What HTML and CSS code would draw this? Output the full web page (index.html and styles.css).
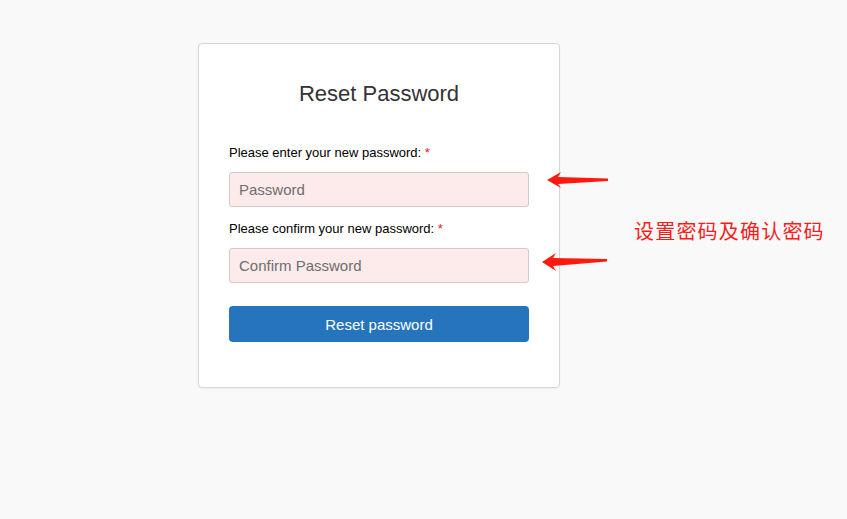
FILE: index.html
```html
<!DOCTYPE html>
<html lang="en">
<head>
<meta charset="utf-8">
<title>Reset Password</title>
<link rel="stylesheet" href="styles.css">
</head>
<body>
<div class="page">
  <div class="card">
    <h2 class="title">Reset Password</h2>
    <form class="form">
      <div class="field">
        <label class="label">Please enter your new password: <span class="req">*</span></label>
        <input class="input" type="password" placeholder="Password">
      </div>
      <div class="field">
        <label class="label">Please confirm your new password: <span class="req">*</span></label>
        <input class="input" type="password" placeholder="Confirm Password">
      </div>
      <button type="button" class="btn">Reset password</button>
    </form>
  </div>
</div>
<svg class="arrows" width="847" height="519" viewBox="0 0 847 519">
  <polygon points="547,180 561,172 558,177 608,178.5 608,181 558,184 561,188" fill="#ff1a0f"/>
  <polygon points="542,262 556,253 553,258 607,259 607,261.5 553,266 556,271" fill="#ff1a0f"/>
</svg>
<div class="note">设置密码及确认密码</div>
</body>
</html>
```
FILE: styles.css
```css
html, body {
  margin: 0;
  padding: 0;
}
body {
  background: #f9f9f9;
  font-family: "Liberation Sans", Arial, sans-serif;
  color: #333;
  width: 847px;
  height: 519px;
  overflow: hidden;
  position: relative;
}
.page {
  display: flex;
  padding: 43px 0 0 198px;
}
.card {
  width: 300px;
  background: #fff;
  border: 1px solid #d6d6d6;
  border-radius: 4px;
  padding: 37px 30px 45px;
  box-shadow: 0 1px 2px rgba(0,0,0,0.05);
}
.title {
  margin: 0;
  font-size: 22px;
  font-weight: normal;
  line-height: 26px;
  text-align: center;
  color: #333;
}
.form {
  display: flex;
  flex-direction: column;
  margin-top: 37px;
}
.field {
  display: flex;
  flex-direction: column;
  gap: 10px;
  margin-bottom: 13px;
}
.label {
  font-size: 13px;
  line-height: 18px;
  color: #000;
}
.req {
  color: #e02020;
}
.input {
  box-sizing: border-box;
  width: 300px;
  height: 35px;
  margin: 0;
  padding: 0 9px;
  font-family: "Liberation Sans", Arial, sans-serif;
  font-size: 15px;
  color: #333;
  background: #fdebeb;
  border: 1px solid #d3c9c9;
  border-radius: 3px;
  outline: none;
}
.input::placeholder {
  color: #6e6e6e;
}
.btn {
  margin-top: 10px;
  height: 36px;
  width: 300px;
  border: none;
  border-radius: 4px;
  background: #2574bc;
  color: #fff;
  font-family: "Liberation Sans", Arial, sans-serif;
  font-size: 15px;
  padding: 0;
}
.arrows {
  position: absolute;
  left: 0;
  top: 0;
  pointer-events: none;
}
.note {
  position: absolute;
  left: 634px;
  top: 221px;
  font-family: "Noto Sans CJK SC", sans-serif;
  font-size: 20px;
  line-height: 20px;
  letter-spacing: 1.2px;
  color: #ff1a1a;
  white-space: nowrap;
}
```
